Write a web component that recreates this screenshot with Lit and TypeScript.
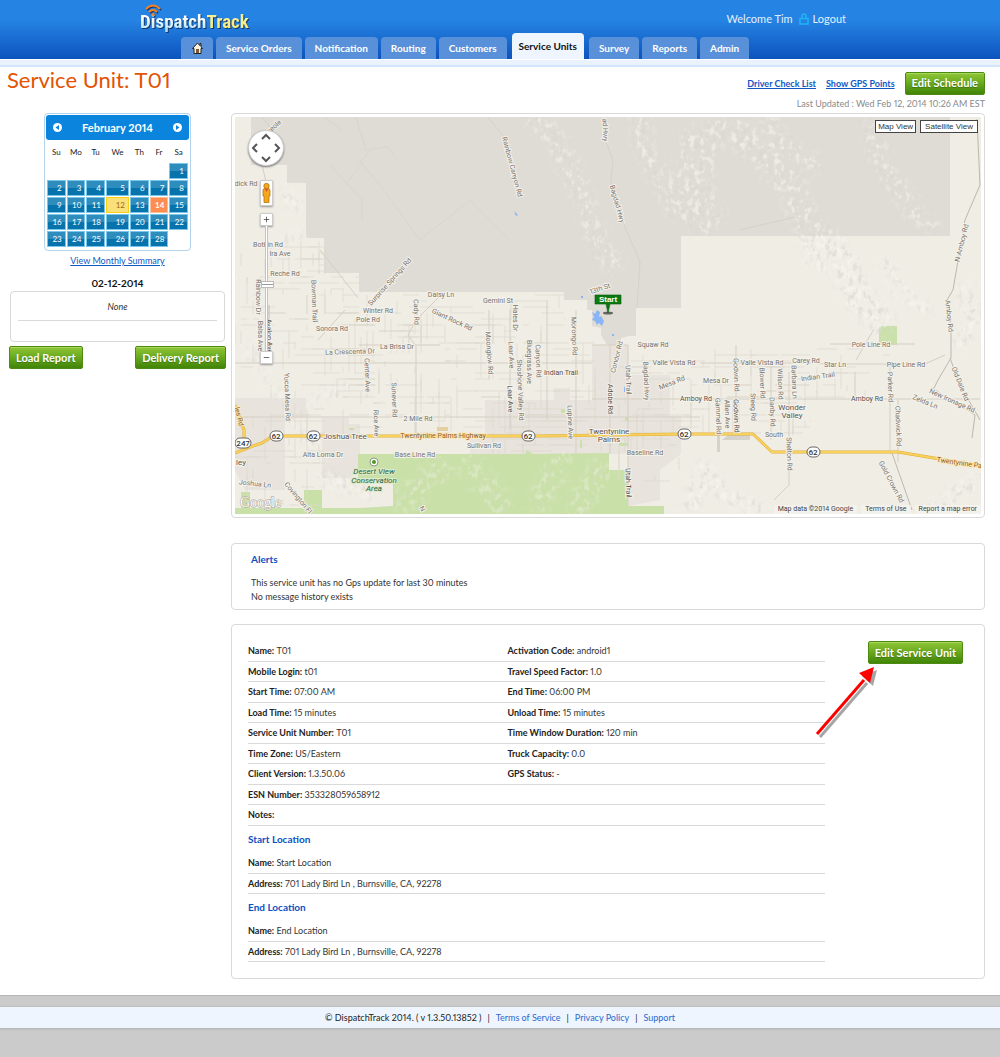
import { LitElement, html, svg, css } from "lit";
import { customElement, state } from "lit/decorators.js";
import { classMap } from "lit/directives/class-map.js";

const shared = css`
  * { box-sizing: border-box; }
  a { color: #1158c4; }
  h1, h2, h3, p, ul, dl, dd { margin: 0; padding: 0; }
  button { font-family: inherit; cursor: pointer; }
  .green {
    height: 23px;
    padding: 0 6px;
    border: 1px solid #4c8a12;
    border-radius: 2px;
    background: linear-gradient(#8fc637, #6cab20 45%, #418507);
    box-shadow: inset 0 1px 0 #a9d75c;
    color: #fff;
    font-size: 11px;
    font-weight: 700;
    line-height: 20px;
    white-space: nowrap;
    text-shadow: 0 1px 1px #3f7410;
  }
`;

type Label = [string, number, number, number?, string?];

const LABELS: Label[] = [
  ["Creole", 273, 128, -42], ["Rainbow Canyon Rd", 512, 167, 75], ["ad Hwy", 605, 130, 88],
  ["Bagdad Hwy", 617, 204, 74], ["dick Rd", 246, 184], ["Botkin Rd", 268, 245], ["Ira Ave", 280, 254],
  ["Reche Rd", 285, 274], ["Rainbow Dr", 258, 297, 90], ["Bowman Trail", 314, 301, 88],
  ["Surprise Springs Rd", 390, 282, -48], ["Daisy Ln", 441, 295], ["Winter Rd", 378, 311],
  ["Pole Rd", 368, 320], ["Cady Rd", 416, 312, 88], ["Giant Rock Rd", 452, 320, 25],
  ["Sonora Rd", 332, 329], ["Balsa Ave", 260, 336, 90], ["Avalon Ave", 269, 336, 88, "dark"],
  ["La Brisa Dr", 397, 347], ["La Crescenta Dr", 350, 352, -2], ["Center Ave", 367, 375, 88],
  ["Yucca Mesa Rd", 287, 397, 88], ["Sunever Rd", 394, 400, 88], ["Rice Ave", 376, 423, 88],
  ["2 Mile Rd", 418, 419], ["Alta Loma Dr", 323, 455], ["Base Line Rd", 415, 455],
  ["Sullivan Rd", 484, 446], ["Joshua Ln", 255, 484, 6], ["Covington Fl", 298, 498, 50],
  ["Gemini St", 498, 301], ["Hales Dr", 515, 318, 90], ["Moonglow Rd", 489, 353, 86],
  ["Lear Ave", 511, 355, 88], ["Shoshone Valley Rd", 520, 390, 88], ["Bluegrass Ave", 529, 362, 90],
  ["Canyon Rd", 538, 361, 88], ["Lear Ave", 510, 399, 88, "dark"], ["Morongo Rd", 574, 336, 88],
  ["Indian Trail", 561, 373, 0, "dark"], ["Lupine Ave", 570, 422, 88], ["13th St", 600, 289, -18],
  ["Condor Rd", 617, 357, -76], ["Utah Trail", 628, 380, 88], ["Adobe Rd", 610, 399, 90, "dark"],
  ["Bagdad Hwy", 646, 381, 88], ["Utah Trail", 628, 483, 88, "dark"], ["Squaw Rd", 653, 345],
  ["Valle Vista Rd", 674, 363], ["Mesa Rd", 672, 383, -22], ["Mesa Dr", 716, 381],
  ["Amboy Rd", 696, 399, 0, "dark"], ["Gammel Rd", 718, 416, 88], ["Allen Ave", 727, 414, 88],
  ["Baseline Rd", 645, 453], ["Valle Vista Rd", 762, 363], ["Godwin Rd", 736, 375, 88],
  ["Godwin Rd", 736, 416, 88, "dark"], ["Blower Rd", 762, 383, 88], ["Wilson Rd", 780, 384, 88],
  ["Barbara Ln", 794, 382, 88], ["Steeg Rd", 753, 407, 88], ["Danby Rd", 772, 412, 88],
  ["Carey Rd", 806, 361], ["Star Ln", 835, 365], ["Indian Trail", 818, 377, -8],
  ["Pole Line Rd", 871, 345], ["Pipe Line Rd", 906, 365], ["Amboy Rd", 867, 399, 0, "dark"],
  ["Parker Rd", 890, 387, 88], ["Chadwick Rd", 898, 426, 88], ["Zelda Ln", 925, 402, 22],
  ["New Ironage Rd", 952, 401, 24], ["Old Dale Rd", 960, 384, 68], ["South", 774, 435],
  ["Shelton Rd", 789, 454, 88], ["Gold Crown Rd", 891, 482, 62], ["N Amboy Rd", 962, 243, -76],
  ["Amboy Rd", 949, 316, 84], ["N", 422, 509, 60],
];

const SHIELDS: [string, number, number][] = [
  ["62", 276, 436], ["62", 313, 436], ["247", 243, 443], ["62", 528, 436], ["62", 684, 434], ["62", 813, 452],
];

// Street grids: x, y, width, height, density.
const GRIDS: [number, number, number, number, number][] = [
  [235, 238, 89, 36, 24], [235, 274, 124, 40, 38], [235, 312, 140, 86, 60], [359, 293, 60, 60, 22],
  [400, 293, 164, 50, 44], [340, 345, 110, 90, 44], [440, 340, 155, 95, 64], [235, 400, 90, 60, 30],
  [485, 400, 190, 55, 44], [610, 345, 100, 90, 44], [700, 345, 110, 90, 58], [800, 345, 90, 55, 14],
  [592, 430, 85, 50, 14], [240, 455, 80, 50, 14],
];

// Hill ranges, as thick strokes that the relief filter breaks up.
const RANGES: [string, number][] = [
  ["M535 118L556 138L580 190L592 228L612 262", 20],
  ["M640 120L645 150L665 190L680 215", 18],
  ["M700 145L690 190L705 215", 38],
  ["M725 125L760 150L790 185L808 225L820 255", 28],
  ["M770 122L785 145L815 165", 16],
  ["M820 235L845 265L860 300L880 320", 28],
  ["M870 130L885 170L910 205L930 225", 18],
  ["M885 262L895 285L925 312", 12],
  ["M965 290L975 320L960 340", 16],
  ["M285 196L298 205M286 240L298 234", 12],
  ["M310 400L345 385M245 345L330 470", 6],
  ["M690 505L705 470L730 500L760 510", 16],
  ["M930 512L960 490L980 480", 14],
  ["M325 480L372 492", 14],
];
const GREEN_RANGES = "M405 500L440 470M470 465L500 505M540 500L560 462M580 505L600 470";

function streets(): string {
  let seed = 7;
  const rnd = () => (seed = (seed * 16807) % 2147483647) / 2147483647;
  const snap = (v: number) => Math.round(v / 6) * 6 + 1;
  let d = "";
  for (const [x, y, w, h, n] of GRIDS) {
    for (let i = 0; i < n; i++) {
      const sx = snap(x + rnd() * w);
      const sy = snap(y + rnd() * h);
      const len = 6 + Math.round(rnd() * 5) * 7;
      d += rnd() > 0.5
        ? `M${sx} ${sy}H${Math.min(x + w, sx + len)}`
        : `M${sx} ${sy}V${Math.min(y + h, sy + len)}`;
    }
  }
  return d;
}

@customElement("dt-map")
class DtMap extends LitElement {
  @state() view = "map";

  static styles = [shared, css`
    :host { display: block; position: relative; font-family: Roboto, "Noto Sans", sans-serif; }
    .canvas { display: block; width: 100%; height: auto; }
    .label { font-size: 7px; fill: #77726b; text-anchor: middle; stroke: #f5f2ec; stroke-width: 2px; paint-order: stroke; stroke-linejoin: round; }
    .dark { fill: #55504a; }
    .town { font-size: 8px; fill: #5b564f; }
    .highway { fill: #8b5a20; stroke: #fbe9bd; }
    .park { font-size: 8px; font-style: italic; fill: #276345; stroke: #dcebc9; }
    .shield { font-size: 8px; font-weight: 500; fill: #333; text-anchor: middle; }
    .start { font: 700 8px "Liberation Sans", sans-serif; fill: #fff; text-anchor: middle; }
    .google { font: 14px "Liberation Serif", serif; fill: #fff; stroke: #a29e97; stroke-width: 1px; paint-order: stroke; }
    .pan {
      position: absolute; left: 13px; top: 13px; width: 36px; height: 36px; border-radius: 50%;
      background: #fff; border: 1px solid #ccc; box-shadow: 0 1px 2px #777;
      display: grid; grid-template: repeat(3, 1fr) / repeat(3, 1fr);
    }
    .pan button { border: 0; background: none; padding: 0; display: grid; place-items: center; }
    .pan svg { width: 10px; height: 10px; fill: none; stroke: #555; stroke-width: 2; }
    .n { grid-area: 1 / 2; } .w { grid-area: 2 / 1; } .e { grid-area: 2 / 3; } .s { grid-area: 3 / 2; }
    .w svg { rotate: -90deg; } .e svg { rotate: 90deg; } .s svg { rotate: 180deg; }
    .tools { position: absolute; left: 25px; top: 63px; width: 13px; display: flex; flex-direction: column; }
    .tool { width: 13px; height: 13px; padding: 0; border: 1px solid #ccc; border-radius: 1px; background: #fff; box-shadow: 0 1px 2px #999; display: grid; place-items: center; }
    .tool svg { width: 7px; height: 7px; stroke: #444; fill: none; }
    .tool.pegman { height: 26px; margin-bottom: 7px; }
    .pegman svg { width: 11px; height: 22px; stroke: none; }
    .zoom { appearance: none; writing-mode: vertical-lr; direction: rtl; width: 13px; height: 125px; margin: 0; background: none; }
    .zoom::-webkit-slider-runnable-track { width: 3px; background: #fff; border: 0 solid #c4c4c4; border-width: 0 1px; margin: 0 5px; }
    .zoom::-webkit-slider-thumb { appearance: none; width: 13px; height: 7px; margin-left: -5px; border: 1px solid #bbb; background: linear-gradient(#fff 2px, #999 2px, #999 3px, #fff 3px); }
    .views { position: absolute; right: 3px; top: 3px; display: flex; gap: 4px; }
    .views button { height: 13px; border: 1px solid #444; background: #fff; color: #333; padding: 0 2px; font: 8px/10px "Liberation Sans", Arial, sans-serif; }
    .views button + button { padding: 0 4px; }
    .credits { position: absolute; right: 0; bottom: 0; display: flex; gap: 4px; font-size: 7px; line-height: 9px; }
    .credits > * { background: #f5f3eecc; padding: 0 4px; color: #444; text-decoration: none; }
  `];

  render() {
    const arrow = html`<svg viewBox="0 0 10 10"><path d="M1 7L5 3L9 7"/></svg>`;
    return html`
      <svg class="canvas" viewBox="235 117 746 397" role="img" aria-label="Map around Twentynine Palms">
        <defs>
          <filter id="shade" filterUnits="userSpaceOnUse" x="235" y="117" width="746" height="397">
            <feTurbulence type="fractalNoise" baseFrequency="0.19 0.14" numOctaves="3" seed="4" result="noise"/>
            <feColorMatrix in="noise" values="0 0 0 0 0.7  0 0 0 0 0.69  0 0 0 0 0.65  5 0 0 0 -2.6" result="ink"/>
            <feGaussianBlur in="SourceAlpha" stdDeviation="5" result="soft"/>
            <feComposite in="ink" in2="soft" operator="in"/>
          </filter>
          <filter id="glow" filterUnits="userSpaceOnUse" x="235" y="117" width="746" height="397">
            <feTurbulence type="fractalNoise" baseFrequency="0.19 0.14" numOctaves="3" seed="11" result="noise"/>
            <feColorMatrix in="noise" values="0 0 0 0 0.94  0 0 0 0 0.93  0 0 0 0 0.86  5 0 0 0 -2.5" result="ink"/>
            <feGaussianBlur in="SourceAlpha" stdDeviation="5" result="soft"/>
            <feComposite in="ink" in2="soft" operator="in"/>
          </filter>
          <g id="ranges" fill="none" stroke="#000" stroke-linecap="round">
            ${RANGES.map(([d, w]) => svg`<path d=${d} stroke-width=${w}/>`)}
          </g>
        </defs>
        <rect x="235" y="117" width="746" height="397" fill="#f0ede5"/>
        <g fill="#e8e3dc">
          <path d="M235 398H306V418H285V490H245L235 470Z"/>
          <path d="M322 418H349V424H360V470L350 478H322Z"/>
          <path d="M485 400H554V388H570V400H592V345H628V375H670V416H681V454L660 470V500L628 506V454H470V436H485Z"/>
        </g>
        <path fill="#dfdbd5" d="M251 117V165H287V183H306V238H324V273H359V292H564V300H587V310H592V326L601 328V335L607 345H621V338L629 336H636V308H681V236H950V117Z"/>
        <g fill="#cae0a9">
          <path d="M358 454H525L527 450L533 454L609 453V470H628V506H664V514H235V508H304V490H322V508H360L393 506V478H358Z"/>
          <path d="M241 492H250V508H241ZM879 326H897V345H879ZM619 443H628V446H619ZM580 440H582V448H580ZM625 417H628V421H625ZM561 409H565V413H561ZM349 428H354V430H349Z"/>
        </g>
        <path fill="#e3cfa0" d="M437 427H448V431H437Z"/>
        <path fill="#d6d2cc" d="M728 435H750V440H722ZM717 435H720V452H717Z"/>
        <path d=${streets()} stroke="#ddd8cd" fill="none" stroke-width="0.7"/>
        <use href="#ranges" filter="url(#glow)" opacity="0.6"/>
        <use href="#ranges" filter="url(#shade)" opacity="0.7"/>
        <g fill="none" stroke="#000" stroke-width="24" stroke-linecap="round">
          <path d=${GREEN_RANGES} filter="url(#shade)" opacity="0.25"/>
          <path d=${GREEN_RANGES} filter="url(#glow)" opacity="0.35"/>
        </g>
        <g fill="none" stroke="#d5cfc4">
          <path d="M324 117L342 130M356 117L366 150L388 147L396 158M371 150L360 162L380 185L420 240M346 183L363 163M420 240L470 200L510 240M330 165L362 200V220" opacity="0.5"/>
          <path d="M488 117L506 140L515 180M604 136L613 160L610 190L622 220L640 262L637 308M740 230L795 217" opacity="0.8"/>
          <path d="M262 117L280 140L262 165L268 190M320 250L358 298M318 340L345 310M440 296L416 320L408 335L416 346V436"/>
          <path d="M235 363H592M359 345H440M592 345H628M592 417H680M235 417H592M628 345V506M610 345V454M576 310V454M510 310V430M547 300V420M489 310V380"/>
          <path d="M592 399H980M700 363H800L830 364H925L945 355M830 344H915M856 360L874 329M855 372V399M890 363V450M789 372V485L774 500M898 399V462M736 345V417M771 365V440M680 417H700"/>
        </g>
        <g fill="none" stroke="#bdb8ae">
          <path d="M977 119L980 185L965 220L953 290L947 300L951 330V358L938 380L932 392M950 358L960 385L980 420M932 388L975 415L972 438M892 453L912 510M269 305V360"/>
        </g>
        <g fill="#8ab4f8">
          <path d="M592 312L595 314L597 310L600 312L599 317L601 316L604 321L602 326L599 323L597 325L595 321L592 320L594 317ZM514 211L518 215L516 216ZM581 296H583V298H581ZM612 334H614V336H612ZM624 387H625V392H624Z"/>
        </g>
        <g fill="none" stroke-linejoin="round">
          <path d="M235 453L250 447L262 443L273 436H540L684 434H753L772 452H898L940 459L981 466M235 405L244 430V440" stroke="#dfae3c" stroke-width="3"/>
          <path d="M235 453L250 447L262 443L273 436H540L684 434H753L772 452H898L940 459L981 466M235 405L244 430V440" stroke="#f8d05c" stroke-width="2"/>
        </g>
        ${LABELS.map(([t, x, y, r = 0, k = ""]) =>
          svg`<text class="label ${k}" x=${x} y=${y + 2} transform="rotate(${r} ${x} ${y})">${t}</text>`)}
        <text class="label highway" x="443" y="438">Twentynine Palms Highway</text>
        <text class="label highway" x="959" y="465" transform="rotate(8 959 465)">Twentynine Pa</text>
        <text class="label highway" x="237" y="417" transform="rotate(76 237 417)">les Rd</text>
        <text class="label town" x="345" y="439">Joshua Tree</text>
        <text class="label town" x="609" y="434">Twentynine</text>
        <text class="label town" x="609" y="442">Palms</text>
        <text class="label town" x="792" y="410">Wonder</text>
        <text class="label town" x="792" y="418">Valley</text>
        <text class="label town" x="241" y="465">ley</text>
        <text class="label park" x="374" y="474">Desert View</text>
        <text class="label park" x="374" y="483">Conservation</text>
        <text class="label park" x="374" y="491">Area</text>
        <circle cx="374" cy="462" r="4" fill="#fff" stroke="#8a9a80"/>
        <circle cx="374" cy="462" r="2" fill="#4c9a1c"/>
        ${SHIELDS.map(([t, x, y]) => svg`
          <rect x=${x - (t.length > 2 ? 8 : 6)} y=${y - 5} width=${t.length > 2 ? 16 : 13} height="10" rx="5" fill="#fff" stroke="#666"/>
          <text class="shield" x=${x} y=${y + 3}>${t}</text>`)}
        <text class="google" x="240" y="507">Google</text>
        <ellipse cx="608" cy="313" rx="5" ry="1.5" fill="#333" opacity="0.7"/>
        <path d="M595 295H621V304H610L608 313L606 304H595Z" fill="#0b7a12" stroke="#075c0c" stroke-width="0.6"/>
        <text class="start" x="608" y="302">Start</text>
      </svg>
      <div class="pan">
        <button class="n" aria-label="Pan up">${arrow}</button>
        <button class="w" aria-label="Pan left">${arrow}</button>
        <button class="e" aria-label="Pan right">${arrow}</button>
        <button class="s" aria-label="Pan down">${arrow}</button>
      </div>
      <div class="tools">
        <button class="tool pegman" aria-label="Street view">
          <svg viewBox="0 0 11 22"><g fill="#f5a81c" stroke="#a86b08" stroke-width="0.7"><path d="M2 8Q2 6.500 4 6.500H7Q9 6.500 9 8V14H8V20.500H3V14H2Z"/><circle cx="5.500" cy="4" r="2.700"/></g><path d="M3.500 6.800H7.500L5.500 10Z" fill="#e8553a"/></svg>
        </button>
        <button class="tool" aria-label="Zoom in"><svg viewBox="0 0 9 9"><path d="M1 4.500H8M4.500 1V8"/></svg></button>
        <input class="zoom" type="range" min="0" max="100" value="53" aria-label="Zoom level">
        <button class="tool" aria-label="Zoom out"><svg viewBox="0 0 9 9"><path d="M1 4.500H8"/></svg></button>
      </div>
      <div class="views">
        <button @click=${() => (this.view = "map")} aria-pressed=${this.view === "map"}>Map View</button>
        <button @click=${() => (this.view = "satellite")} aria-pressed=${this.view === "satellite"}>Satellite View</button>
      </div>
      <div class="credits"><span>Map data ©2014 Google</span><a href="#terms">Terms of Use</a><a href="#report">Report a map error</a></div>
    `;
  }
}

@customElement("dt-calendar")
class DtCalendar extends LitElement {
  @state() selected = 14;

  static styles = [shared, css`
    :host { display: block; border: 1px solid #b4d3ec; border-radius: 4px; padding: 1px 1px 2px; }
    .bar { height: 25px; display: flex; align-items: center; justify-content: space-between; padding: 0 7px; background: #0a84dd; border-radius: 3px; color: #fff; }
    .bar h2 { font-size: 11px; font-weight: 700; }
    .nav { width: 9px; height: 9px; padding: 0; border: 0; border-radius: 50%; background: #fff; display: grid; place-items: center; }
    .nav svg { width: 9px; height: 9px; fill: #0a84dd; }
    table { width: 100%; border-collapse: separate; border-spacing: 1px; table-layout: fixed; }
    .wide { width: 23px; }
    th { height: 21px; padding: 0; font-size: 8px; font-weight: 400; color: #222; }
    td { height: 16px; padding: 0; }
    td button { display: block; width: 100%; height: 16px; padding: 0 3px 0 0; border: 1px solid #79c6ea; background: linear-gradient(#2f8dbd 50%, #0673ad 50%); color: #fff; font-size: 8px; line-height: 12px; text-align: right; }
    td .today { background: #f9e07a; border-color: #fcd113; color: #a3680a; }
    td .picked { background: #ff8d52; border-color: #fbc19f; font-weight: 700; }
  `];

  render() {
    const weeks = [0, 1, 2, 3, 4].map((w) => [0, 1, 2, 3, 4, 5, 6].map((d) => w * 7 + d - 5));
    return html`
      <div class="bar">
        <button class="nav" aria-label="Previous month"><svg viewBox="0 0 9 9"><path d="M6 2V7L2.500 4.500Z"/></svg></button>
        <h2>February 2014</h2>
        <button class="nav" aria-label="Next month"><svg viewBox="0 0 9 9"><path d="M3 2V7L6.500 4.500Z"/></svg></button>
      </div>
      <table>
        <colgroup><col><col><col><col class="wide"><col><col><col></colgroup>
        <thead><tr>${["Su", "Mo", "Tu", "We", "Th", "Fr", "Sa"].map((d) => html`<th>${d}</th>`)}</tr></thead>
        <tbody>${weeks.map((w) => html`<tr>${w.map((d) => html`<td>${d > 0 && d <= 28 ? html`
          <button class=${classMap({ today: d === 12, picked: d === this.selected })} @click=${() => (this.selected = d)}>${d}</button>` : ""}</td>`)}</tr>`)}
        </tbody>
      </table>`;
  }
}

const TABS = ["Service Orders", "Notification", "Routing", "Customers", "Service Units", "Survey", "Reports", "Admin"];

const DETAILS: [string, string][][] = [
  [["Name", "T01"], ["Activation Code", "android1"]],
  [["Mobile Login", "t01"], ["Travel Speed Factor", "1.0"]],
  [["Start Time", "07:00 AM"], ["End Time", "06:00 PM"]],
  [["Load Time", "15 minutes"], ["Unload Time", "15 minutes"]],
  [["Service Unit Number", "T01"], ["Time Window Duration", "120 min"]],
  [["Time Zone", "US/Eastern"], ["Truck Capacity", "0.0"]],
  [["Client Version", "1.3.50.06"], ["GPS Status", "-"]],
  [["ESN Number", "353328059658912"]],
  [["Notes", ""]],
];

const place = (name: string): [string, string][][] => [
  [["Name", name]],
  [["Address", "701 Lady Bird Ln , Burnsville, CA, 92278"]],
];

@customElement("app-root")
class AppRoot extends LitElement {
  static styles = [shared, css`
    :host { display: flex; flex-direction: column; min-height: 100vh; background: #cbcbcb; color: #333; font-family: "Trebuchet MS", Lato, "Open Sans", sans-serif; font-size: 9px; font-variant-numeric: proportional-nums; }
    header { background: linear-gradient(#2583e3 35%, #0d53bd); }
    .inner { width: 72%; min-width: 720px; height: 59px; margin: 0 auto; padding-right: 14px; display: grid; grid-template: 37px 22px / auto 1fr; }
    .logo { position: relative; font: 700 19px/22px "Liberation Sans Narrow", "Roboto Condensed", "Liberation Sans", sans-serif; padding-top: 11px; display: flex; text-decoration: none; filter: drop-shadow(1px 1px 0 #14386e); }
    .logo span { color: transparent; background: linear-gradient(#fff 30%, #9fd9f2 85%); background-clip: text; -webkit-background-clip: text; }
    .logo .gold { background-image: linear-gradient(#f8ef95 30%, #f7e35d); }
    .logo svg { position: absolute; left: 5px; top: 4px; width: 16px; height: 12px; fill: none; stroke: #f58220; stroke-width: 2; }
    .user { justify-self: end; display: flex; align-items: center; gap: 4px; color: #e4effc; font-size: 11px; }
    .user a { color: inherit; text-decoration: none; }
    .user svg { width: 10px; height: 12px; fill: none; stroke: #1fb5f5; stroke-width: 1.5; margin-left: 2px; }
    nav { grid-column: 1 / 3; display: flex; gap: 3px; align-items: flex-end; padding-left: 41px; }
    .tab { height: 22px; padding: 0 10px; display: flex; align-items: center; justify-content: center; border-radius: 4px 4px 0 0; background: #5890da; color: #fff; font-size: 10px; font-weight: 700; text-decoration: none; white-space: nowrap; }
    .home { width: 32px; }
    .home svg { flex: none; width: 11px; height: 12px; }
    .active { height: 26px; margin: 0 2px; padding: 0 7px; background: #eef5ff; color: #111; }
    .strip { height: 8px; background: #eaf2fe; border-top: 1px solid #fff; border-bottom: 2px solid #d3e5fa; }
    main { background: #fff; padding: 4px 15px 16px 0; border-bottom: 1px solid #b5b5b5; }
    .top { display: flex; justify-content: space-between; padding-left: 7px; height: 42px; }
    h1 { color: #e25303; font-size: 22px; line-height: 18px; font-weight: 400; }
    .side { display: flex; flex-direction: column; align-items: flex-end; }
    .actions { display: flex; align-items: center; gap: 10px; height: 24px; }
    .actions a { font-weight: 700; }
    .updated { line-height: 18px; color: #8a8a8a; }
    .columns { display: grid; grid-template-columns: 231px minmax(0, 1fr); align-items: start; }
    aside { padding: 0 5px 0 9px; display: flex; flex-direction: column; align-items: center; }
    dt-calendar { width: 147px; }
    .monthly { line-height: 20px; }
    .date { font-size: 10px; line-height: 16px; margin-top: 4px; color: #111; font-weight: 700; }
    .panel { border: 1px solid #d9d9d9; border-radius: 4px; background: #fff; }
    .jobs { width: 215px; height: 51px; padding: 7px; margin-bottom: 4px; text-align: center; font-style: italic; }
    .jobs p { line-height: 16px; padding-bottom: 5px; border-bottom: 1px solid #d9d9d9; }
    .reports { width: 100%; display: flex; justify-content: space-between; }
    .map { padding: 3px; margin-bottom: 25px; }
    .alerts { padding: 8px 19px 5px; margin-bottom: 14px; line-height: 14px; }
    h3 { color: #0b50c4; font-size: 10px; line-height: 27px; height: 27px; font-weight: 700; }
    .alerts h3 { line-height: 14px; height: 24px; }
    .details { padding: 16px 21px 16px 16px; display: flex; gap: 43px; align-items: flex-start; }
    .list { flex: 1; }
    .row { display: grid; grid-template-columns: 9fr 11fr; height: 21px; line-height: 20px; border-bottom: 1px solid #dadada; }
    .row:nth-child(even) { height: 20px; }
    dt { display: inline; font-weight: 700; color: #222; }
    dd { display: inline; }
    .edit { position: relative; }
    .arrow { position: absolute; left: -54px; top: 24px; width: 66px; height: 76px; pointer-events: none; }
    footer { margin-top: 11px; height: 22px; display: flex; align-items: center; justify-content: center; gap: 6px; background: #eef5ff; border-bottom: 1px solid #b9b9b9; box-shadow: 0 0 2px #aaa; color: #222; }
    footer a { text-decoration: none; color: #2a69cc; }
  `];

  private rows(items: [string, string][][]) {
    return html`<dl>${items.map((r) => html`<div class="row">${r.map(([k, v]) => html`<div><dt>${k}:</dt> <dd>${v}</dd></div>`)}</div>`)}</dl>`;
  }

  render() {
    return html`
      <header>
        <div class="inner">
          <a class="logo" href="#home"><span>Dispatch</span><span class="gold">Track</span>
            <svg viewBox="0 0 16 12"><path d="M1 5Q8 -2 15 5M4 8Q8 4 12 8"/><circle cx="8" cy="10.500" r="1.500" fill="#f58220" stroke="none"/></svg>
          </a>
          <div class="user"><span>Welcome Tim</span>
            <svg viewBox="0 0 10 12"><path d="M3 5V3Q3 1 5 1T7 3V5M1 5.500H9V11H1Z"/></svg>
            <a href="#logout">Logout</a></div>
          <nav>
            <a class="tab home" href="#home" aria-label="Home"><svg viewBox="0 0 11 12"><path d="M5.500 1L0.500 6.500H2V11.500H9V6.500H10.500L9 4.800V1.500H8V3.700Z" fill="#f7f1dd" stroke="#222"/><path d="M4 11V7H7V11Z" fill="#7b5a33"/></svg></a>
            ${TABS.map((t) => html`<a href="#" class=${classMap({ tab: true, active: t === "Service Units" })}>${t}</a>`)}
          </nav>
        </div>
      </header>
      <div class="strip"></div>
      <main>
        <div class="top">
          <h1>Service Unit: T01</h1>
          <div class="side">
            <div class="actions"><a href="#check">Driver Check List</a><a href="#gps">Show GPS Points</a><button class="green">Edit Schedule</button></div>
            <div class="updated">Last Updated : Wed Feb 12, 2014 10:26 AM EST</div>
          </div>
        </div>
        <div class="columns">
          <aside>
            <dt-calendar></dt-calendar>
            <a class="monthly" href="#summary">View Monthly Summary</a>
            <h2 class="date">02-12-2014</h2>
            <div class="panel jobs"><p>None</p></div>
            <div class="reports"><button class="green">Load Report</button><button class="green">Delivery Report</button></div>
          </aside>
          <div>
            <div class="panel map"><dt-map></dt-map></div>
            <section class="panel alerts">
              <h3>Alerts</h3>
              <p>This service unit has no Gps update for last 30 minutes</p>
              <p>No message history exists</p>
            </section>
            <section class="panel details">
              <div class="list">
                ${this.rows(DETAILS)}
                <h3>Start Location</h3>${this.rows(place("Start Location"))}
                <h3>End Location</h3>${this.rows(place("End Location"))}
              </div>
              <div class="edit">
                <button class="green">Edit Service Unit</button>
                <svg class="arrow" viewBox="0 0 66 76">
                  <g opacity="0.35" transform="translate(3 3)"><path d="M3 69L50 15" stroke="#000" stroke-width="3"/><path d="M60 2L45 8L56 18Z"/></g>
                  <path d="M3 69L50 15" stroke="#f00" stroke-width="3"/><path d="M60 2L45 8L56 18Z" fill="#f00"/>
                </svg>
              </div>
            </section>
          </div>
        </div>
      </main>
      <footer><span>© DispatchTrack 2014. ( v 1.3.50.13852 )</span><span>|</span><a href="#terms">Terms of Service</a><span>|</span><a href="#privacy">Privacy Policy</a><span>|</span><a href="#support">Support</a></footer>
    `;
  }
}
